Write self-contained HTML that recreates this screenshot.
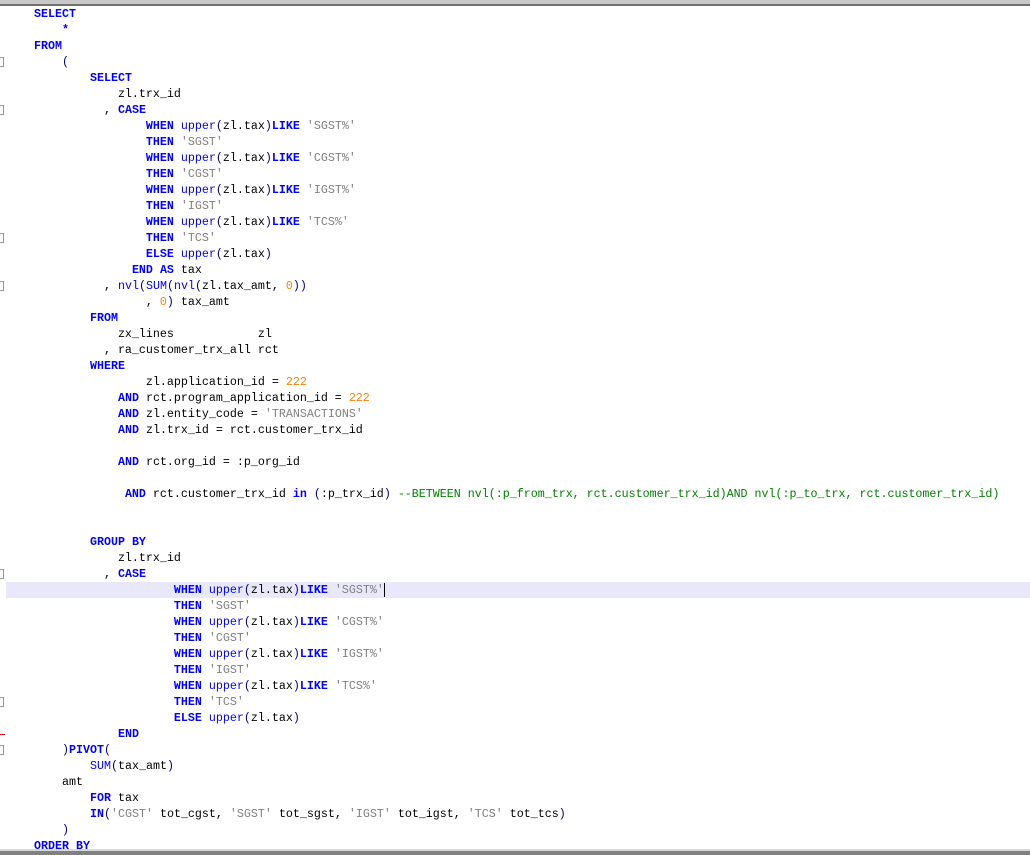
<!DOCTYPE html>
<html><head><meta charset="utf-8"><style>
html,body{margin:0;padding:0;background:#fff;width:1030px;height:855px;overflow:hidden;position:relative}
#top{position:absolute;left:0;top:0;width:1030px;height:4px;background:#c8c8c8}
#top2{position:absolute;left:0;top:4px;width:1030px;height:2px;background:#707070}
#bot{position:absolute;left:0;top:849px;width:1030px;height:2px;background:#d8d8d8}
#bot2{position:absolute;left:0;top:851px;width:1030px;height:4px;background:#808080}
#hl{position:absolute;left:6px;top:582px;width:1024px;height:16px;background:#e8e8fa}
pre{position:absolute;left:34px;top:6px;margin:0;font-family:"Liberation Mono",monospace;font-size:11.67px;line-height:16px;color:#000}
.k{color:#0000ff;font-weight:bold}
.f{color:#0000ff}
.s{color:#808080}
.n{color:#ff8000}
.c{color:#008000}
.p{color:#000080}
.m{position:absolute;left:0;width:3px;height:8px;border:1px solid #999;border-left:none}
.r{position:absolute;left:0;width:5px;height:1px;background:#e00}
</style></head><body>
<div id="top"></div><div id="top2"></div>
<div id="hl"></div>
<div class="m" style="top:57px"></div>
<div class="m" style="top:105px"></div>
<div class="m" style="top:233px"></div>
<div class="m" style="top:281px"></div>
<div class="m" style="top:569px"></div>
<div class="m" style="top:697px"></div>
<div class="m" style="top:745px"></div>
<div class="r" style="top:734px"></div>
<pre><span class="k">SELECT</span>
    <span class="k">*</span>
<span class="k">FROM</span>
    <span class="p">(</span>
        <span class="k">SELECT</span>
            zl.trx_id
          , <span class="k">CASE</span>
                <span class="k">WHEN</span> <span class="f">upper</span><span class="p">(</span>zl.tax<span class="p">)</span><span class="k">LIKE</span> <span class="s">'SGST%'</span>
                <span class="k">THEN</span> <span class="s">'SGST'</span>
                <span class="k">WHEN</span> <span class="f">upper</span><span class="p">(</span>zl.tax<span class="p">)</span><span class="k">LIKE</span> <span class="s">'CGST%'</span>
                <span class="k">THEN</span> <span class="s">'CGST'</span>
                <span class="k">WHEN</span> <span class="f">upper</span><span class="p">(</span>zl.tax<span class="p">)</span><span class="k">LIKE</span> <span class="s">'IGST%'</span>
                <span class="k">THEN</span> <span class="s">'IGST'</span>
                <span class="k">WHEN</span> <span class="f">upper</span><span class="p">(</span>zl.tax<span class="p">)</span><span class="k">LIKE</span> <span class="s">'TCS%'</span>
                <span class="k">THEN</span> <span class="s">'TCS'</span>
                <span class="k">ELSE</span> <span class="f">upper</span><span class="p">(</span>zl.tax<span class="p">)</span>
              <span class="k">END</span> <span class="k">AS</span> tax
          , <span class="f">nvl</span><span class="p">(</span><span class="f">SUM</span><span class="p">(</span><span class="f">nvl</span><span class="p">(</span>zl.tax_amt, <span class="n">0</span><span class="p">))</span>
                , <span class="n">0</span><span class="p">)</span> tax_amt
        <span class="k">FROM</span>
            zx_lines            zl
          , ra_customer_trx_all rct
        <span class="k">WHERE</span>
                zl.application_id = <span class="n">222</span>
            <span class="k">AND</span> rct.program_application_id = <span class="n">222</span>
            <span class="k">AND</span> zl.entity_code = <span class="s">'TRANSACTIONS'</span>
            <span class="k">AND</span> zl.trx_id = rct.customer_trx_id

            <span class="k">AND</span> rct.org_id = :p_org_id

             <span class="k">AND</span> rct.customer_trx_id <span class="k">in</span> <span class="p">(</span>:p_trx_id<span class="p">)</span> <span class="c">--BETWEEN nvl(:p_from_trx, rct.customer_trx_id)AND nvl(:p_to_trx, rct.customer_trx_id)</span>


        <span class="k">GROUP BY</span>
            zl.trx_id
          , <span class="k">CASE</span>
                    <span class="k">WHEN</span> <span class="f">upper</span><span class="p">(</span>zl.tax<span class="p">)</span><span class="k">LIKE</span> <span class="s">'SGST%'</span><span style="border-left:1px solid #000">&#8203;</span>
                    <span class="k">THEN</span> <span class="s">'SGST'</span>
                    <span class="k">WHEN</span> <span class="f">upper</span><span class="p">(</span>zl.tax<span class="p">)</span><span class="k">LIKE</span> <span class="s">'CGST%'</span>
                    <span class="k">THEN</span> <span class="s">'CGST'</span>
                    <span class="k">WHEN</span> <span class="f">upper</span><span class="p">(</span>zl.tax<span class="p">)</span><span class="k">LIKE</span> <span class="s">'IGST%'</span>
                    <span class="k">THEN</span> <span class="s">'IGST'</span>
                    <span class="k">WHEN</span> <span class="f">upper</span><span class="p">(</span>zl.tax<span class="p">)</span><span class="k">LIKE</span> <span class="s">'TCS%'</span>
                    <span class="k">THEN</span> <span class="s">'TCS'</span>
                    <span class="k">ELSE</span> <span class="f">upper</span><span class="p">(</span>zl.tax<span class="p">)</span>
            <span class="k">END</span>
    <span class="p">)</span><span class="k">PIVOT</span><span class="p">(</span>
        <span class="f">SUM</span><span class="p">(</span>tax_amt<span class="p">)</span>
    amt
        <span class="k">FOR</span> tax
        <span class="k">IN</span><span class="p">(</span><span class="s">'CGST'</span> tot_cgst, <span class="s">'SGST'</span> tot_sgst, <span class="s">'IGST'</span> tot_igst, <span class="s">'TCS'</span> tot_tcs<span class="p">)</span>
    <span class="p">)</span>
<span class="k">ORDER BY</span></pre>
<div id="bot"></div><div id="bot2"></div>
</body></html>
